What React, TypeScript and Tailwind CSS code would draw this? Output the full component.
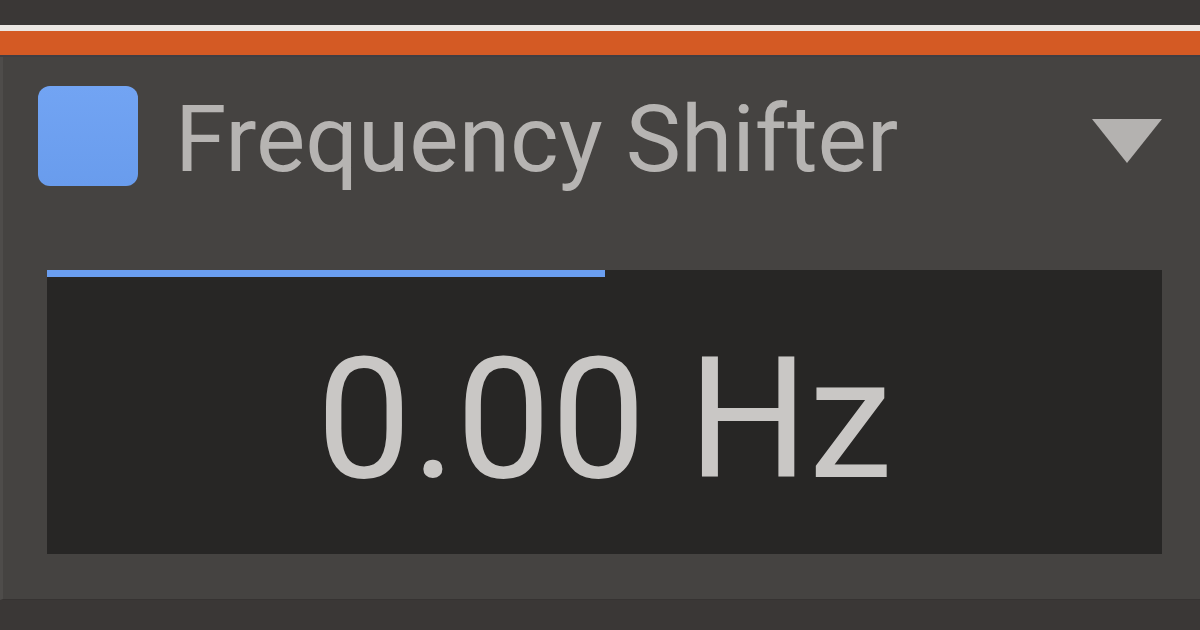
import React from 'react';

const ROBOTO = "font-['Roboto',_'Liberation_Sans',_sans-serif]";

const SliderDisplay = ({ value, unit, ratio }: { value: number; unit: string; ratio: number }) => (
  <div className="relative mt-[84px] ml-[44px] mr-[38px] h-[284px] bg-[#272625]">
    {/* value bar along the top edge */}
    <div className="absolute left-0 top-0 h-[7px] bg-[#6a9ef0]" style={{ width: `${ratio * 100}%` }} />
    <div className={`flex justify-center pt-[65px] text-[169px] leading-none text-[#c9c7c5] ${ROBOTO}`}>
      {value.toFixed(2)} {unit}
    </div>
  </div>
);

export default function App() {
  return (
    <div className="w-[1200px] h-[630px] bg-[#3a3736] flex flex-col overflow-hidden">
      <div className="h-[25px] shrink-0" />
      <div className="h-[6px] shrink-0 bg-[#ebe7e3]" />
      <div className="h-[26px] shrink-0 bg-[#d45a24] border-b-2 border-[#403e43]" />

      <div className="h-[543px] shrink-0 bg-[#454341] border-l-[3px] border-[#4e4c4a] border-b border-b-[#363332]">
        <div className="flex items-start pt-[29px] pl-[35px] pr-[38px]">
          <div className="w-[100px] h-[100px] rounded-[12px] bg-gradient-to-b from-[#72a4f3] to-[#699ced]" />
          <div className={`ml-[37px] mt-[7px] text-[93px] leading-none text-[#b6b4b2] ${ROBOTO}`}>
            Frequency Shifter
          </div>
          <svg className="ml-auto mt-[33px]" width="70" height="44" viewBox="0 0 70 44">
            <polygon points="0,0 70,0 35,44" fill="#b4b2b0" />
          </svg>
        </div>

        <SliderDisplay value={0} unit="Hz" ratio={0.5} />
      </div>
    </div>
  );
}
